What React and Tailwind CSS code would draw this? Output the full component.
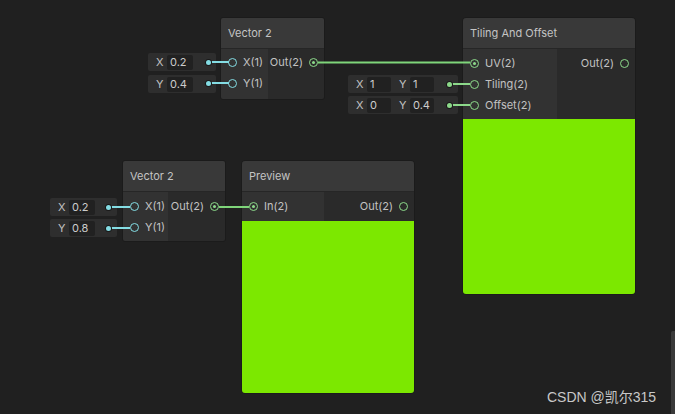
import React from "react";

const FONT = { fontFamily: "Inter, 'Noto Sans', sans-serif" };

function Port({ color, filled }) {
  return (
    <span
      className="flex h-[9px] w-[9px] shrink-0 items-center justify-center rounded-full border-[1.5px]"
      style={{ borderColor: color }}
    >
      {filled && <span className="h-[3px] w-[3px] rounded-full" style={{ background: color }} />}
    </span>
  );
}

function Header({ title }) {
  return (
    <div className="flex h-[31px] items-center border-b border-[#262626] bg-[#393939] pl-[7px] text-[11px] text-[#c4c4c4]">
      {title}
    </div>
  );
}

function InRow({ label, color, filled }) {
  return (
    <div className="flex h-[21px] items-center gap-[6px] pl-[7px] text-[11px] text-[#c2c2c2]">
      <Port color={color} filled={filled} />
      <span>{label}</span>
    </div>
  );
}

function OutRow({ color, filled }) {
  return (
    <div className="flex h-[21px] items-center justify-end gap-[6px] pr-[6px] text-[11px] text-[#c2c2c2]">
      <span>Out(2)</span>
      <Port color={color} filled={filled} />
    </div>
  );
}

function Field({ items, width, left, top, boxW }) {
  return (
    <div
      className="absolute flex h-[18px] items-center rounded-[2px] bg-[#2e2e2e] pl-[8px] text-[11px] text-[#c2c2c2]"
      style={{ left, top, width }}
    >
      {items.map((it, i) => (
        <React.Fragment key={i}>
          <span className="w-[11px]">{it.l}</span>
          <span
            className="mr-[8px] flex h-[15px] items-center rounded-[2px] bg-[#212121] pl-[3px] text-[#cccccc]"
            style={{ width: boxW }}
          >
            {it.v}
          </span>
        </React.Fragment>
      ))}
    </div>
  );
}

const CYAN = "#84dde4";
const GREEN = "#8cd98a";

export default function App() {
  return (
    <div className="relative h-[414px] w-[675px] overflow-hidden bg-[#202020]" style={FONT}>
      {/* inline fields */}
      <Field left={148} top={53} width={68} boxW={26} items={[{ l: "X", v: "0.2" }]} />
      <Field left={148} top={75} width={68} boxW={26} items={[{ l: "Y", v: "0.4" }]} />
      <Field left={50} top={198} width={67} boxW={26} items={[{ l: "X", v: "0.2" }]} />
      <Field left={50} top={219} width={67} boxW={26} items={[{ l: "Y", v: "0.8" }]} />
      <Field left={348} top={75} width={110} boxW={24} items={[{ l: "X", v: "1" }, { l: "Y", v: "1" }]} />
      <Field left={348} top={96} width={110} boxW={24} items={[{ l: "X", v: "0" }, { l: "Y", v: "0.4" }]} />

      {/* Vector 2 (top) */}
      <div className="absolute left-[220px] top-[17px] w-[105px] overflow-hidden rounded-[3px] border border-[#1b1b1b]">
        <Header title="Vector 2" />
        <div className="flex h-[50px]">
          <div className="w-[47px] bg-[#323232] pt-[3px]">
            <InRow label="X(1)" color={CYAN} />
            <InRow label="Y(1)" color={CYAN} />
          </div>
          <div className="flex-1 bg-[#2a2a2a] pt-[3px]">
            <OutRow color={GREEN} filled />
          </div>
        </div>
      </div>

      {/* Tiling And Offset */}
      <div className="absolute left-[462px] top-[17px] w-[174px] overflow-hidden rounded-[4px] border border-[#1b1b1b]">
        <Header title="Tiling And Offset" />
        <div className="flex h-[70px]">
          <div className="w-[94px] bg-[#323232] pt-[4px]">
            <InRow label="UV(2)" color={GREEN} filled />
            <InRow label="Tiling(2)" color={GREEN} />
            <InRow label="Offset(2)" color={GREEN} />
          </div>
          <div className="flex-1 bg-[#2a2a2a] pt-[4px]">
            <OutRow color={GREEN} />
          </div>
        </div>
        <div className="h-[175px] bg-[#7ce800]" />
      </div>

      {/* Vector 2 (bottom) */}
      <div className="absolute left-[122px] top-[160px] w-[104px] overflow-hidden rounded-[3px] border border-[#1b1b1b]">
        <Header title="Vector 2" />
        <div className="flex h-[49px]">
          <div className="w-[45px] bg-[#323232] pt-[4px]">
            <InRow label="X(1)" color={CYAN} />
            <InRow label="Y(1)" color={CYAN} />
          </div>
          <div className="flex-1 bg-[#2a2a2a] pt-[4px]">
            <OutRow color={GREEN} filled />
          </div>
        </div>
      </div>

      {/* Preview */}
      <div className="absolute left-[241px] top-[160px] w-[174px] overflow-hidden rounded-[4px] border border-[#1b1b1b]">
        <Header title="Preview" />
        <div className="flex h-[29px]">
          <div className="w-[82px] bg-[#323232] pt-[4px]">
            <InRow label="In(2)" color={GREEN} filled />
          </div>
          <div className="flex-1 bg-[#2a2a2a] pt-[4px]">
            <OutRow color={GREEN} />
          </div>
        </div>
        <div className="h-[172px] bg-[#7ce800]" />
      </div>

      {/* wires (drawn over nodes, ending at the port rings) */}
      <svg className="pointer-events-none absolute left-0 top-0" width="675" height="414">
        <line x1="318" y1="62.5" x2="470" y2="62.5" stroke="#7fd57a" strokeWidth="2" />
        <line x1="219" y1="207" x2="249" y2="207" stroke="#7fd57a" strokeWidth="2" />
        <line x1="208" y1="62" x2="229" y2="62" stroke={CYAN} strokeWidth="2" />
        <line x1="208" y1="83" x2="229" y2="83" stroke={CYAN} strokeWidth="2" />
        <line x1="108" y1="207" x2="130" y2="207" stroke={CYAN} strokeWidth="2" />
        <line x1="108" y1="228" x2="130" y2="228" stroke={CYAN} strokeWidth="2" />
        <line x1="449" y1="84" x2="470" y2="84" stroke={GREEN} strokeWidth="2" />
        <line x1="449" y1="105" x2="470" y2="105" stroke={GREEN} strokeWidth="2" />
      </svg>

      {/* field dots */}
      {[
        [208, 62, CYAN],
        [208, 83, CYAN],
        [108, 207, CYAN],
        [108, 228, CYAN],
        [449, 84, GREEN],
        [449, 105, GREEN],
      ].map(([x, y, c], i) => (
        <span
          key={i}
          className="absolute h-[5px] w-[5px] rounded-full"
          style={{ left: x - 2.5, top: y - 2.5, background: c, boxShadow: "0 0 0 1px #1a1a1a" }}
        />
      ))}

      {/* scrollbar */}
      <div className="absolute right-0 top-[331px] h-[83px] w-[4px] rounded-tl-[2px] bg-[#3a3a3a]" />

      {/* watermark */}
      <div
        className="absolute left-[547px] top-[388px] text-[14px] leading-[18px] text-[#c8c8c8]"
        style={{ fontFamily: "'Liberation Sans', 'Noto Sans CJK SC', sans-serif" }}
      >
        CSDN @凯尔315
      </div>
    </div>
  );
}
